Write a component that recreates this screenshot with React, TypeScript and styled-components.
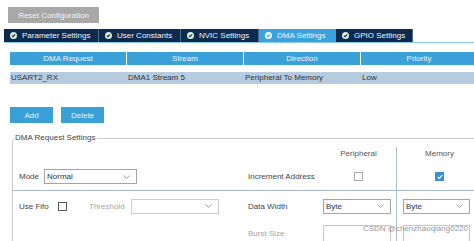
import React from "react";
import styled, { createGlobalStyle } from "styled-components";

const GlobalStyle = createGlobalStyle`
  html, body {
    margin: 0;
    padding: 0;
    background: #fff;
  }
  body {
    font-family: "Liberation Sans", Arial, sans-serif;
    font-size: 8px;
    color: #3a3a3a;
    overflow: hidden;
  }
`;

const tabs = [
    { label: "Parameter Settings", width: 95 },
    { label: "User Constants", width: 82 },
    { label: "NVIC Settings", width: 78 },
    { label: "DMA Settings", width: 77, active: true },
    { label: "GPIO Settings", width: 77 },
];

const columns = ["DMA Request", "Stream", "Direction", "Priority"];
const row = ["USART2_RX", "DMA1 Stream 5", "Peripheral To Memory", "Low"];

function TabCheck({ active }: { active?: boolean }) {
    return (
        <svg width="7" height="7" viewBox="0 0 8 8">
            <circle cx="4" cy="4" r="4" fill={active ? "#f2fbff" : "#d9efd6"} />
            <polyline
                points="2.2,4.1 3.5,5.4 5.9,2.8"
                fill="none"
                stroke={active ? "#3ba3dc" : "#0c2b4f"}
                strokeWidth="1.2"
            />
        </svg>
    );
}

function Chevron() {
    return (
        <svg width="7" height="4" viewBox="0 0 7 4">
            <polyline points="0.5,0.5 3.5,3.3 6.5,0.5" fill="none" stroke="#8a8a8a" strokeWidth="0.9" />
        </svg>
    );
}

function Select({ value, width, disabled }: { value?: string; width: number; disabled?: boolean }) {
    return (
        <SelectBox $width={width} $disabled={disabled}>
            <span>{value}</span>
            {value !== undefined || disabled ? <Chevron /> : null}
        </SelectBox>
    );
}

export default function App() {
    return (
        <Page>
            <GlobalStyle />
            <ResetButton>Reset Configuration</ResetButton>

            <TabBar>
                {tabs.map((t) => (
                    <Tab key={t.label} $width={t.width} $active={t.active}>
                        <TabCheck active={t.active} />
                        {t.label}
                    </Tab>
                ))}
            </TabBar>

            {/* DMA request table */}
            <Table>
                <TableRow>
                    {columns.map((c) => (
                        <HeadCell key={c}>{c}</HeadCell>
                    ))}
                </TableRow>
                <DataRow>
                    {row.map((c) => (
                        <DataCell key={c}>{c}</DataCell>
                    ))}
                </DataRow>
            </Table>

            <ButtonRow>
                <BlueButton>Add</BlueButton>
                <BlueButton>Delete</BlueButton>
            </ButtonRow>

            <Settings>
                <Legend>DMA Request Settings</Legend>
                <SettingsGrid>
                    <VLine />
                    <HLine />

                    <ColHead $col={3}>Peripheral</ColHead>
                    <ColHead $col={4}>Memory</ColHead>

                    <LeftField $row={2}>
                        <Label $width={25}>Mode</Label>
                        <Select value="Normal" width={93} />
                    </LeftField>
                    <RowLabel $row={2}>Increment Address</RowLabel>
                    <Centered $row={2} $col={3}>
                        <CheckBox $muted />
                    </Centered>
                    <Centered $row={2} $col={4}>
                        <CheckBox $checked>
                            <svg width="6" height="6" viewBox="0 0 6 6">
                                <polyline points="0.8,3 2.4,4.6 5.3,1.2" fill="none" stroke="#fff" strokeWidth="1.2" />
                            </svg>
                        </CheckBox>
                    </Centered>

                    <LeftField $row={4}>
                        <Label $width={39}>Use Fifo</Label>
                        <CheckBox />
                        <Label $width={42} $muted style={{ marginLeft: 22 }}>Threshold</Label>
                        <Select width={88} disabled />
                    </LeftField>
                    <RowLabel $row={4}>Data Width</RowLabel>
                    <Cell $row={4} $col={3} $pad={3}>
                        <Select value="Byte" width={68} />
                    </Cell>
                    <Cell $row={4} $col={4} $pad={6}>
                        <Select value="Byte" width={67} />
                    </Cell>

                    <RowLabel $row={5} $muted>Burst Size</RowLabel>
                    <Cell $row={5} $col={3} $pad={3}>
                        <Input $width={68} />
                    </Cell>
                    <Cell $row={5} $col={4} $pad={6}>
                        <Input $width={67} />
                    </Cell>
                </SettingsGrid>
            </Settings>

            <Watermark>CSDN @chenzhaoqiang0220</Watermark>
        </Page>
    );
}

/* ================== styled-components ================== */

const Page = styled.div`
    position: relative;
    width: 474px;
    height: 241px;
    overflow: hidden;
    background: #fff;
`;

const ResetButton = styled.button`
    display: block;
    margin: 7px 0 0 8px;
    width: 91px;
    height: 16px;
    padding: 0;
    border: none;
    background: #a8a8a8;
    color: #f4f4f4;
    font-family: inherit;
    font-size: 8px;
`;

const TabBar = styled.div`
    display: flex;
    margin: 6px 0 0 4px;
    border-bottom: 1px solid #8ccaeb;
`;

const Tab = styled.div<{ $width: number; $active?: boolean }>`
    box-sizing: border-box;
    width: ${({ $width }) => $width}px;
    height: 13px;
    display: flex;
    align-items: center;
    gap: 5px;
    padding-left: 6px;
    background: ${({ $active }) => ($active ? "#3ba3dc" : "#0c2b4f")};
    color: #f0f6fb;
    border-right: 1px solid ${({ $active }) => ($active ? "#3ba3dc" : "#4d6a8a")};
    white-space: nowrap;
`;

const Table = styled.div`
    margin: 9px 0 0 10px;
    width: 480px;
`;

const TableRow = styled.div`
    display: grid;
    grid-template-columns: 116px 116px 116px 116px;
    column-gap: 1px;
`;

const DataRow = styled(TableRow)`
    margin-top: 7px;
    background: #b7cbe0;
`;

const HeadCell = styled.div`
    height: 13px;
    line-height: 13px;
    text-align: center;
    background: #3aa0d8;
    color: #eaf6fd;
`;

const DataCell = styled.div`
    height: 12px;
    line-height: 12px;
    padding-left: 1px;
    color: #333;
`;

const ButtonRow = styled.div`
    display: flex;
    gap: 8px;
    margin: 23px 0 0 10px;
`;

const BlueButton = styled.button`
    width: 43px;
    height: 16px;
    padding: 0;
    border: none;
    background: #3aa0d8;
    color: #e6f3fb;
    font-family: inherit;
    font-size: 8px;
`;

const Settings = styled.fieldset`
    margin: 10px 0 0 12px;
    padding: 0;
    width: 469px;
    border: 1px solid #c9c9c9;
    border-top-left-radius: 4px;
    min-width: 0;
`;

const Legend = styled.legend`
    margin-left: 1px;
    padding: 0 2px 0 1px;
    line-height: 10px;
    color: #444;
`;

const SettingsGrid = styled.div`
    position: relative;
    display: grid;
    grid-template-columns: 231px 76px 77px 85px;
    grid-template-rows: 20px 27px 1px 30px 24px;
`;

const VLine = styled.div`
    grid-column: 3;
    grid-row: 1 / -1;
    justify-self: end;
    margin-top: 4px;
    width: 1px;
    background: #a9bad3;
`;

const HLine = styled.div`
    grid-column: 1 / -1;
    grid-row: 3;
    background: #a9bad3;
`;

const ColHead = styled.div<{ $col: number }>`
    grid-row: 1;
    grid-column: ${({ $col }) => $col};
    display: flex;
    align-items: center;
    justify-content: center;
    color: #555;
`;

const LeftField = styled.div<{ $row: number }>`
    grid-column: 1;
    grid-row: ${({ $row }) => $row};
    display: flex;
    align-items: center;
    padding-left: 6px;
`;

const Label = styled.span<{ $width: number; $muted?: boolean }>`
    width: ${({ $width }) => $width}px;
    flex: none;
    color: ${({ $muted }) => ($muted ? "#a3a3a3" : "#444")};
`;

const RowLabel = styled.div<{ $row: number; $muted?: boolean }>`
    grid-column: 2;
    grid-row: ${({ $row }) => $row};
    display: flex;
    align-items: center;
    padding-left: 4px;
    white-space: nowrap;
    color: ${({ $muted }) => ($muted ? "#a3a3a3" : "#444")};
`;

const Cell = styled.div<{ $row: number; $col: number; $pad: number }>`
    grid-row: ${({ $row }) => $row};
    grid-column: ${({ $col }) => $col};
    display: flex;
    align-items: center;
    padding-left: ${({ $pad }) => $pad}px;
`;

const Centered = styled.div<{ $row: number; $col: number }>`
    grid-row: ${({ $row }) => $row};
    grid-column: ${({ $col }) => $col};
    display: flex;
    align-items: center;
    justify-content: center;
`;

const SelectBox = styled.div<{ $width: number; $disabled?: boolean }>`
    box-sizing: border-box;
    width: ${({ $width }) => $width}px;
    height: 15px;
    display: flex;
    align-items: center;
    justify-content: space-between;
    padding: 0 6px 0 2px;
    background: #fff;
    border: 1px solid ${({ $disabled }) => ($disabled ? "#cdcdcd" : "#a4a4a4")};
    color: #333;
`;

const Input = styled.div<{ $width: number }>`
    box-sizing: border-box;
    width: ${({ $width }) => $width}px;
    height: 17px;
    border: 1px solid #c4c4c4;
    background: #fff;
`;

const CheckBox = styled.span<{ $checked?: boolean; $muted?: boolean }>`
    box-sizing: border-box;
    width: 9px;
    height: 9px;
    flex: none;
    display: inline-flex;
    align-items: center;
    justify-content: center;
    border: 1px solid ${({ $checked, $muted }) => ($checked ? "#3b8fd6" : $muted ? "#a8a8a8" : "#555")};
    background: ${({ $checked }) => ($checked ? "#3b8fd6" : "#fff")};
`;

const Watermark = styled.div`
    position: absolute;
    right: 6px;
    bottom: 8px;
    font-size: 8px;
    color: rgba(120, 120, 120, 0.8);
    white-space: nowrap;
`;
